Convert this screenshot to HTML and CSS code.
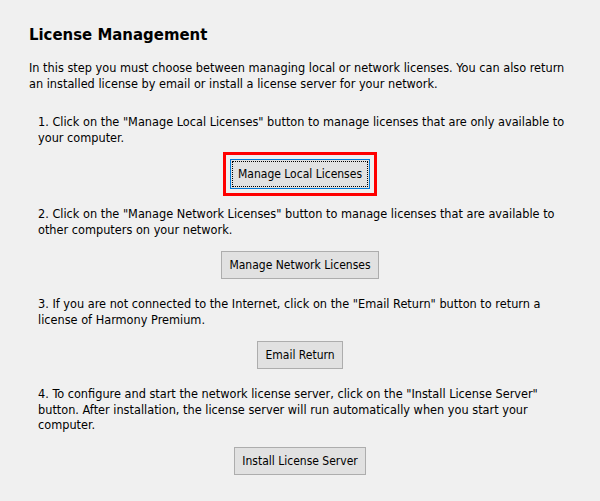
FILE: index.html
```html
<!DOCTYPE html>
<html lang="en">
<head>
<meta charset="utf-8">
<title>License Management</title>
<link rel="stylesheet" href="styles.css">
</head>
<body>
<div class="page">
  <h1 class="title">License Management</h1>
  <p class="intro">In this step you must choose between managing local or network licenses. You can also return an installed license by email or install a license server for your network.</p>

  <div class="step step-first">
    <p class="step-text">1. Click on the "Manage Local Licenses" button to manage licenses that are only available to your computer.</p>
    <div class="btn-row"><button class="btn btn-default">Manage Local Licenses</button></div>
  </div>

  <div class="step">
    <p class="step-text">2. Click on the "Manage Network Licenses" button to manage licenses that are available to other computers on your network.</p>
    <div class="btn-row"><button class="btn">Manage Network Licenses</button></div>
  </div>

  <div class="step">
    <p class="step-text">3. If you are not connected to the Internet, click on the "Email Return" button to return a license of Harmony Premium.</p>
    <div class="btn-row"><button class="btn">Email Return</button></div>
  </div>

  <div class="step">
    <p class="step-text">4. To configure and start the network license server, click on the "Install License Server" button. After installation, the license server will run automatically when you start your computer.</p>
    <div class="btn-row"><button class="btn">Install License Server</button></div>
  </div>
</div>
</body>
</html>
```

FILE: styles.css
```css
html, body {
  margin: 0;
  padding: 0;
  background: #f0f0f0;
}

body {
  font-family: "DejaVu Sans Condensed", "DejaVu Sans", sans-serif;
  font-stretch: semi-condensed;
  font-size: 12.6px;
  line-height: 15.5px;
  color: #000;
}

.page {
  padding: 25px 0 0 29px;
  width: 549px;
}

.title {
  margin: 0;
  font-size: 16.6px;
  line-height: 20px;
  font-weight: bold;
}

.intro {
  margin: 15px 0 0 0;
}

.step {
  padding-left: 9px;
}

.step-text {
  margin: 17px 0 0 0;
}

.step-first .step-text {
  margin-top: 23px;
}

.btn-row {
  display: flex;
  justify-content: center;
  margin: 14px 16px 0 0;
}

.btn {
  position: relative;
  font-family: inherit;
  font-stretch: inherit;
  font-size: 12px;
  color: #000;
  height: 28px;
  padding: 0 7px;
  background: #e1e1e1;
  border: 1px solid #adadad;
  border-radius: 0;
  margin: 0;
}

.btn-default {
  border-color: #0078d7;
  outline: 3px solid #ff0000;
  outline-offset: 4px;
  height: 30px;
}

.btn-default::before {
  content: "";
  position: absolute;
  left: 1px;
  top: 1px;
  right: 1px;
  bottom: 1px;
  border: 1px dotted #000;
}
```
